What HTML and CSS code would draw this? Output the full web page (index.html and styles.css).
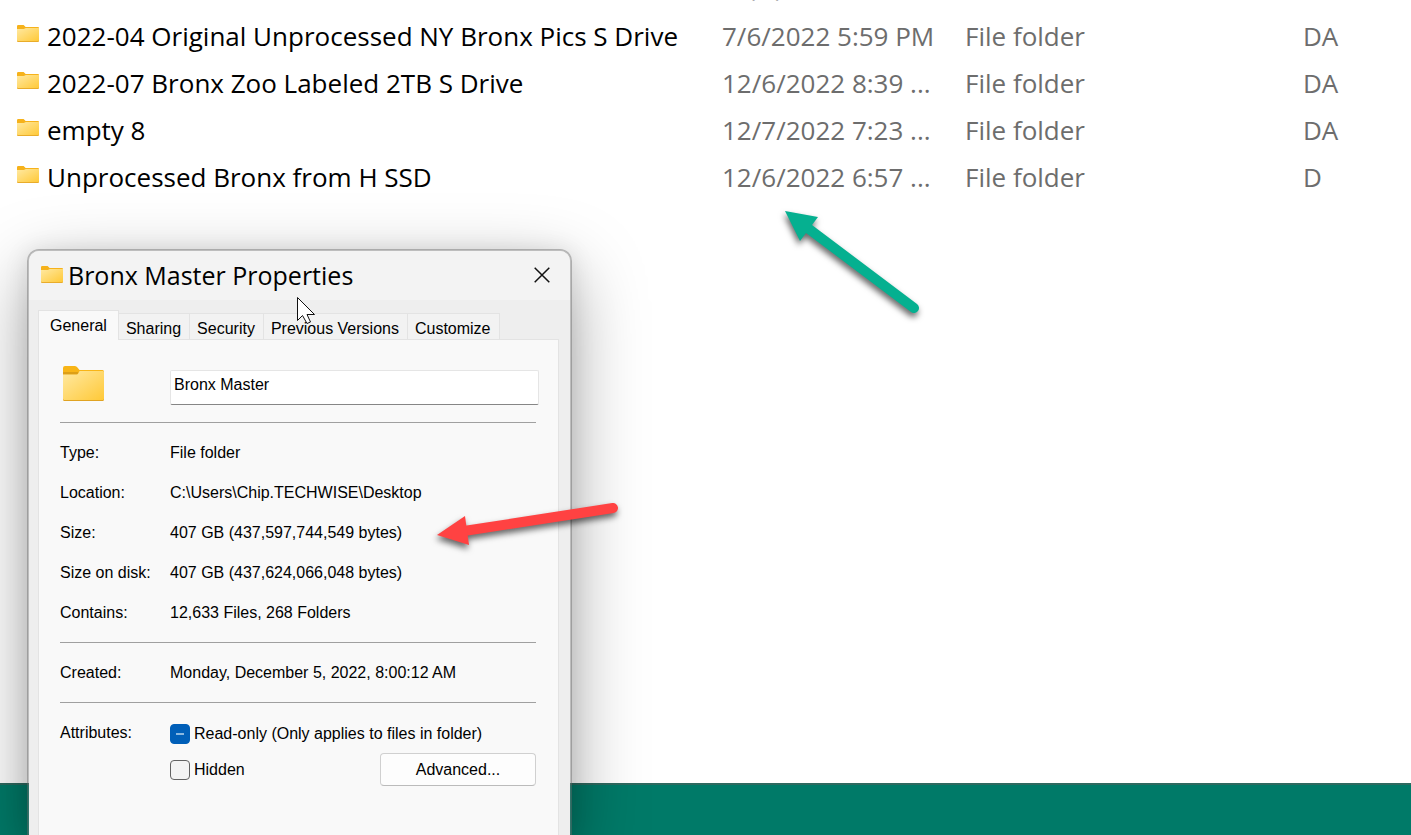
FILE: index.html
```html
<html lang="en">
  <head>
    <meta charset="UTF-8" />
    <meta name="viewport" content="width=device-width, initial-scale=1.0" />
    <title>Bronx Master Properties</title>
    <link rel="stylesheet" href="styles.css">
  </head>
  <body>
    <!-- shared icons -->
    <svg class="defs">
      <defs>
        <linearGradient id="folder-fill" x1="0" y1="0" x2="1" y2="1">
          <stop offset="0" stop-color="#ffe9a2" />
          <stop offset="1" stop-color="#ffc938" />
        </linearGradient>
        <symbol id="folder-small" viewBox="0 0 22 17">
          <path d="M0 1.2Q0 0 1.2 0H6.6L8.6 2H21Q22 2 22 3V8H0Z" fill="#f6b21b" />
          <path d="M0 4H6.8L8.8 3H22V16Q22 17 21 17H1Q0 17 0 16Z" fill="#e9ac2a" />
          <path d="M0 4H6.8L8.8 3H22V15.2Q22 16 21 16H1Q0 16 0 15.2Z" fill="url(#folder-fill)" />
        </symbol>
        <symbol id="folder-large" viewBox="0 0 41 42">
          <path d="M0 2Q0 0 2 0H11.5Q13 0 14 1L16.5 4H39.5Q41 4 41 5.5V12H0Z" fill="#f8b517" />
          <path d="M0 6H15V8.5H0Z" fill="#dd9f17" />
          <path d="M0 8.5H13.5Q14.5 8.5 15.5 7L16.5 5H40Q41 5 41 6V33.5Q41 35 39.5 35H1.5Q0 35 0 33.5Z" fill="#e0a322" />
          <path d="M0 8.5H13.5Q14.5 8.5 15.5 7L16.5 5H40Q41 5 41 6V32.5Q41 34 39.5 34H1.5Q0 34 0 32.5Z" fill="url(#folder-fill)" />
        </symbol>
      </defs>
    </svg>

    <main class="explorer">
      <table class="files">
        <tbody>
          <!-- row scrolled out of view -->
          <tr class="scrolled">
            <td class="name"></td>
            <td class="date">12/6/2022</td>
            <td class="type"></td>
            <td class="attr"></td>
          </tr>
          <tr>
            <td class="name"><svg class="icon"><use href="#folder-small" /></svg>2022-04 Original Unprocessed NY Bronx Pics S Drive</td>
            <td class="date">7/6/2022 5:59 PM</td>
            <td class="type">File folder</td>
            <td class="attr">DA</td>
          </tr>
          <tr>
            <td class="name"><svg class="icon"><use href="#folder-small" /></svg>2022-07 Bronx Zoo Labeled 2TB S Drive</td>
            <td class="date">12/6/2022 8:39 ...</td>
            <td class="type">File folder</td>
            <td class="attr">DA</td>
          </tr>
          <tr>
            <td class="name"><svg class="icon"><use href="#folder-small" /></svg>empty 8</td>
            <td class="date">12/7/2022 7:23 ...</td>
            <td class="type">File folder</td>
            <td class="attr">DA</td>
          </tr>
          <tr>
            <td class="name"><svg class="icon"><use href="#folder-small" /></svg>Unprocessed Bronx from H SSD</td>
            <td class="date">12/6/2022 6:57 ...</td>
            <td class="type">File folder</td>
            <td class="attr">D</td>
          </tr>
        </tbody>
      </table>
    </main>

    <section class="dialog" role="dialog" aria-labelledby="dialog-title">
      <header class="titlebar">
        <svg class="icon"><use href="#folder-small" /></svg>
        <h1 id="dialog-title">Bronx Master Properties</h1>
        <button class="close" aria-label="Close">
          <svg width="16" height="16" viewBox="0 0 16 16">
            <path d="M.7 .7L15.3 15.3M15.3 .7L.7 15.3" stroke="#111" stroke-width="1.5" />
          </svg>
        </button>
      </header>

      <nav class="tabs" role="tablist">
        <button class="tab active" role="tab" aria-selected="true">General</button>
        <button class="tab" role="tab">Sharing</button>
        <button class="tab" role="tab">Security</button>
        <button class="tab" role="tab">Previous Versions</button>
        <button class="tab" role="tab">Customize</button>
      </nav>

      <form class="panel">
        <div class="head">
          <svg class="icon-large"><use href="#folder-large" /></svg>
          <input type="text" class="folder-name" aria-label="Folder name" value="Bronx Master" />
        </div>
        <hr />
        <dl>
          <dt>Type:</dt>
          <dd>File folder</dd>
          <dt>Location:</dt>
          <dd>C:\Users\Chip.TECHWISE\Desktop</dd>
          <dt>Size:</dt>
          <dd>407 GB (437,597,744,549 bytes)</dd>
          <dt>Size on disk:</dt>
          <dd>407 GB (437,624,066,048 bytes)</dd>
          <dt>Contains:</dt>
          <dd>12,633 Files, 268 Folders</dd>
        </dl>
        <hr />
        <dl>
          <dt>Created:</dt>
          <dd>Monday, December 5, 2022, 8:00:12 AM</dd>
        </dl>
        <hr />
        <div class="attributes">
          <span class="caption">Attributes:</span>
          <div class="options">
            <label class="check" for="readonly"><input type="checkbox" id="readonly" />Read-only (Only applies to files in folder)</label>
            <div class="option-row">
              <label class="check" for="hidden"><input type="checkbox" id="hidden" />Hidden</label>
              <button type="button" class="advanced">Advanced...</button>
            </div>
          </div>
        </div>
      </form>
    </section>

    <!-- arrows and mouse pointer on top of the windows -->
    <svg class="overlay" width="960" height="600" viewBox="0 0 960 600">
      <g class="arrow">
        <path d="M809 229L914 308" stroke="#05b090" stroke-width="10" stroke-linecap="round" />
        <path d="M785 211L818 217L800 241Z" fill="#05b090" />
      </g>
      <g class="arrow">
        <path d="M464 531L613 508" stroke="#ff4242" stroke-width="10" stroke-linecap="round" />
        <path d="M437 535L465 516L469 545Z" fill="#ff4242" />
      </g>
      <path class="pointer" d="M297.5 297.5V320.5L302.5 315.5L307 323.5L310.5 322L307 314.5H314.5Z" />
    </svg>

    <script>
      // the folder holds both read-only and writable files
      document.getElementById("readonly").indeterminate = true;
    </script>
  </body>
</html>
```
FILE: styles.css
```css
* {
  box-sizing: border-box;
}
html {
  height: 100%;
}
body {
  position: relative;
  display: flex;
  flex-direction: column;
  height: 100vh;
  margin: 0;
  padding-bottom: 52px;
  overflow: hidden;
  background-color: #007a68;
  font-family: "Liberation Sans", Arial, sans-serif;
  font-size: 16px;
  color: #000;
}
button,
input {
  margin: 0;
  font: inherit;
  color: inherit;
}
.defs {
  position: absolute;
  width: 0;
  height: 0;
}
.icon {
  flex: none;
  width: 22px;
  height: 17px;
}

/* file list */
.explorer {
  flex: 1;
  overflow: hidden;
  background-color: #fff;
  box-shadow: 0 2px 0 #2e6a60;
}
.files {
  width: 100%;
  margin-top: -34px;
  table-layout: fixed;
  border-collapse: collapse;
  font-family: "Open Sans", "Noto Sans", sans-serif;
  font-size: 26px;
  line-height: 47px;
  color: #6d6d6d;
}
.files td {
  height: 47px;
  padding: 0;
  white-space: nowrap;
}
.files .name {
  width: 722px;
  padding-left: 17px;
  color: #000;
}
.files .icon {
  margin-right: 8px;
  vertical-align: 4px;
}
.files .date {
  width: 243px;
}
.files .type {
  width: 338px;
}
.files .scrolled .date {
  padding-top: 2px;
  font-family: "DejaVu Sans", sans-serif;
  font-size: 24px;
  line-height: 45px;
}

/* properties window */
.dialog {
  position: absolute;
  top: 249px;
  bottom: 0;
  left: 27px;
  width: 545px;
  display: flex;
  flex-direction: column;
  border: 2px solid rgba(110, 110, 110, 0.45);
  border-bottom: 0;
  border-radius: 12px 12px 0 0;
  background-color: #eee;
  background-clip: padding-box;
  box-shadow: 0 24px 72px rgba(0, 0, 0, 0.35), 0 2px 24px rgba(0, 0, 0, 0.1);
}
.titlebar {
  display: flex;
  align-items: center;
  height: 49px;
  padding: 0 20px 1px 12px;
  border-radius: 10px 10px 0 0;
  background-color: #f3f3f3;
}
.titlebar .icon {
  margin-bottom: 2px;
}
h1 {
  flex: 1;
  margin: 0 0 0 5px;
  font-family: "Open Sans", "Noto Sans", sans-serif;
  font-size: 25px;
  font-weight: 400;
  line-height: 47px;
}
.close {
  display: flex;
  padding: 0;
  border: 0;
  background: none;
}

.tabs {
  display: flex;
  align-items: flex-end;
  height: 40px;
  padding-left: 9px;
}
.tab {
  height: 27px;
  padding: 4px 8px 0 7px;
  border: 1px solid #e3e3e3;
  border-left: 0;
  background-color: #f2f2f2;
  line-height: 18px;
  white-space: nowrap;
}
.tab.active {
  position: relative;
  height: 30px;
  padding: 0 11px;
  border-left: 1px solid #e3e3e3;
  border-bottom: 0;
  background-color: #f9f9f9;
}

.panel {
  flex: 1;
  margin: -1px 11px 0 9px;
  padding: 0 22px 0 21px;
  border: 1px solid #e3e3e3;
  border-bottom: 0;
  background-color: #f9f9f9;
}
.head {
  display: grid;
  grid-template-columns: 110px 1fr;
  align-items: center;
  margin-right: -3px;
  padding: 26px 0 5px;
}
.icon-large {
  width: 41px;
  height: 42px;
  margin-left: 3px;
}
.folder-name {
  width: 100%;
  height: 35px;
  padding: 0 3px 4px;
  border: 1px solid #e5e5e5;
  border-bottom-color: #868686;
  border-radius: 2px;
  background-color: #fff;
}
hr {
  height: 1px;
  margin: 9px 0 10px;
  border: 0;
  background-color: #a0a0a0;
}
dl {
  display: grid;
  grid-template-columns: 110px 1fr;
  margin: 0;
  line-height: 40px;
}
dd {
  margin: 0;
}
.attributes {
  display: grid;
  grid-template-columns: 110px 1fr;
}
.caption {
  line-height: 40px;
}
.options {
  display: flex;
  flex-direction: column;
  gap: 9px;
  padding-top: 11px;
}
.option-row {
  display: flex;
  align-items: center;
  justify-content: space-between;
}
.check {
  display: flex;
  align-items: center;
  gap: 4px;
  line-height: 20px;
  white-space: nowrap;
}
.check input {
  appearance: none;
  width: 20px;
  height: 20px;
  border: 1px solid #626262;
  border-radius: 4px;
  background-color: #f3f3f3;
}
.check input:indeterminate {
  border-color: #005fb8;
  background: linear-gradient(#8ab8e0, #8ab8e0) center / 8px 2px no-repeat #005fb8;
}
.advanced {
  width: 156px;
  height: 33px;
  padding: 0;
  border: 1px solid #d0d0d0;
  border-bottom-color: #bbb;
  border-radius: 4px;
  background-color: #fdfdfd;
}

.overlay {
  position: absolute;
  top: 0;
  left: 0;
  pointer-events: none;
}
.arrow {
  filter: drop-shadow(-1px 4px 3px rgba(0, 0, 0, 0.6));
}
.pointer {
  fill: #fff;
  stroke: #111;
}
```
